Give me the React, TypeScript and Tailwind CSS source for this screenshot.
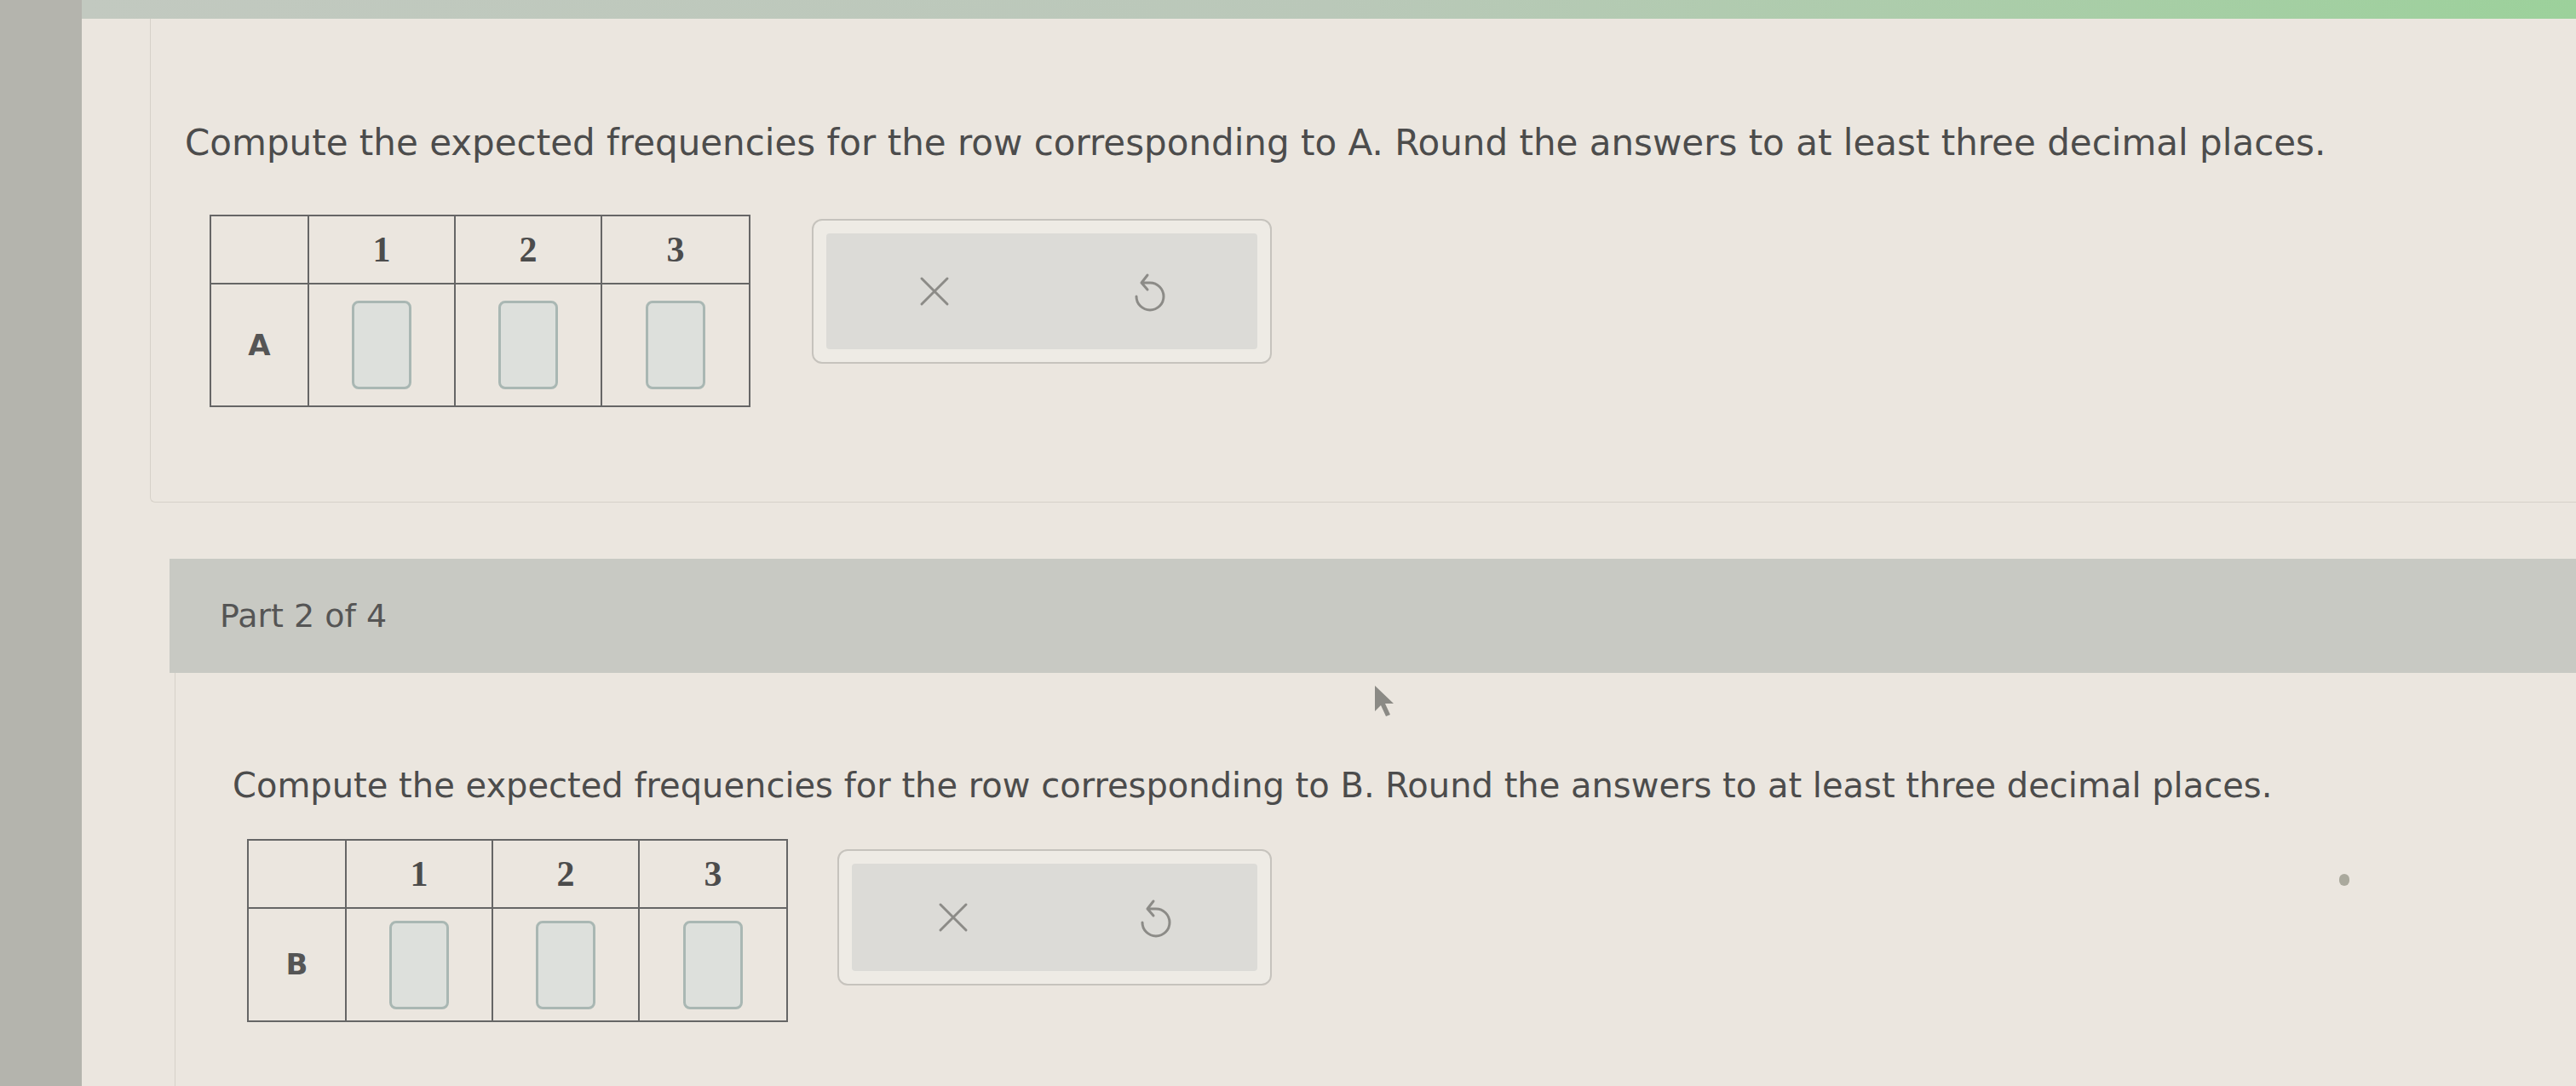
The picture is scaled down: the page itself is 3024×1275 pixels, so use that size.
import React from "react";

const sans = { fontFamily: '"DejaVu Sans", Verdana, sans-serif' };
const serif = { fontFamily: '"Liberation Serif", "Times New Roman", serif' };

function XIcon() {
  return (
    <svg width="38" height="38" viewBox="0 0 38 38" fill="none">
      <path d="M4 4 L34 34 M34 4 L4 34" stroke="#8c8b87" strokeWidth="3" strokeLinecap="round" />
    </svg>
  );
}

function UndoIcon() {
  return (
    <svg width="40" height="50" viewBox="0 0 40 50" fill="none">
      <path
        d="M17 6 L10 15 L17 23 M10 15 L20 15 A16 16 0 1 1 4 31"
        stroke="#8c8b87"
        strokeWidth="3"
        strokeLinecap="round"
        strokeLinejoin="round"
      />
    </svg>
  );
}

function InputBox() {
  return <div className="w-[70px] h-[104px] rounded-[8px] border-[3px] border-[#a9b7b3] bg-[#dde0dc]" />;
}

function FreqTable({ label, bodyH }: { label: string; bodyH: number }) {
  return (
    <div className="border-2 border-[#666] w-[635px] shrink-0">
      <div className="grid grid-cols-[115px_172px_172px_172px] h-[80px] border-b-2 border-[#666]">
        <div className="border-r-2 border-[#666]" />
        {["1", "2", "3"].map((n, i) => (
          <div
            key={n}
            className={`flex items-center justify-center text-[42px] font-bold text-[#4c4c4c] ${i < 2 ? "border-r-2 border-[#666]" : ""}`}
            style={serif}
          >
            {n}
          </div>
        ))}
      </div>
      <div className="grid grid-cols-[115px_172px_172px_172px]" style={{ height: bodyH }}>
        <div className="border-r-2 border-[#666] flex items-center justify-center text-[34px] font-bold text-[#555]" style={sans}>
          {label}
        </div>
        {[0, 1, 2].map((i) => (
          <div key={i} className={`flex items-center justify-center ${i < 2 ? "border-r-2 border-[#666]" : ""}`}>
            <InputBox />
          </div>
        ))}
      </div>
    </div>
  );
}

function ActionBox({ w, h }: { w: number; h: number }) {
  return (
    <div className="rounded-[12px] border-2 border-[#c6c3bd] bg-[#eeebe5] p-[15px]" style={{ width: w, height: h }}>
      <div className="w-full h-full rounded-[4px] bg-[#dcdbd7] flex">
        <div className="flex-1 flex items-center justify-center">
          <XIcon />
        </div>
        <div className="flex-1 flex items-center justify-center">
          <UndoIcon />
        </div>
      </div>
    </div>
  );
}

export default function App() {
  return (
    <div className="relative w-[3024px] h-[1275px] overflow-hidden flex bg-[#ebe6df]" style={sans}>
      <div className="w-[96px] h-full shrink-0 bg-[#b4b4ad]" />
      <div className="flex-1 flex flex-col min-h-0">
        <div className="h-[22px] shrink-0 bg-linear-to-r from-[#c2c9c0] via-[#bac8b9] to-[#9cd19b]" />
        <div className="pl-[80px] flex flex-col flex-1 min-h-0">
          {/* Part 1 panel */}
          <div className="h-[568px] shrink-0 border-l border-b border-[#d6d1c9] rounded-bl-[6px] pl-[40px] pt-[122px]">
            <p className="text-[42px] leading-[48px] text-[#4c4c4c]">
              Compute the expected frequencies for the row corresponding to A. Round the answers to at least three decimal places.
            </p>
            <div className="flex items-start gap-[72px] mt-[60px] ml-[29px]">
              <FreqTable label="A" bodyH={142} />
              <div className="mt-[5px]">
                <ActionBox w={540} h={170} />
              </div>
            </div>
          </div>

          {/* Part 2 header */}
          <div className="mt-[66px] shrink-0 ml-[23px] h-[134px] bg-[#c8c9c3] flex items-center pl-[59px]">
            <span className="text-[38px] text-[#555]">Part 2 of 4</span>
          </div>

          {/* Part 2 panel */}
          <div className="ml-[29px] flex-1 min-h-0 border-l border-[#d6d1c9] pl-[67px] pt-[108px]">
            <p className="text-[40px] leading-[48px] text-[#4c4c4c]">
              Compute the expected frequencies for the row corresponding to B. Round the answers to at least three decimal places.
            </p>
            <div className="flex items-start gap-[58px] mt-[39px] ml-[17px]">
              <FreqTable label="B" bodyH={131} />
              <div className="mt-[12px]">
                <ActionBox w={510} h={160} />
              </div>
            </div>
          </div>
        </div>
      </div>

      {/* mouse cursor */}
      <svg className="absolute left-[1612px] top-[803px]" width="30" height="44" viewBox="0 0 30 44">
        <path d="M2 2 L2 32 L9 25 L15 38 L20 36 L14 23 L24 23 Z" fill="#8b8a85" />
      </svg>
      {/* speck */}
      <div className="absolute left-[2746px] top-[1026px] w-[12px] h-[14px] rounded-full bg-[#8f8f80] opacity-70" />
    </div>
  );
}
